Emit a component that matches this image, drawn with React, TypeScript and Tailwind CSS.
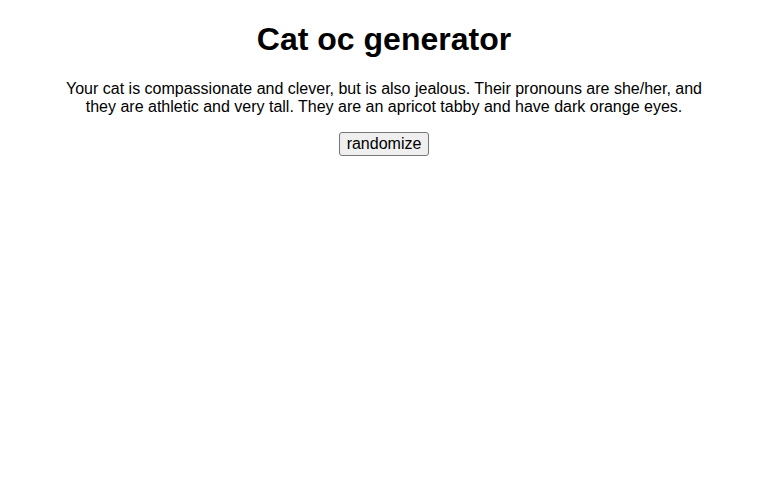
import { useState } from "react";

const traits = ["compassionate", "clever", "jealous", "brave", "shy", "curious", "grumpy", "loyal"];
const pronouns = ["she/her", "he/him", "they/them"];
const builds = ["athletic", "chubby", "scrawny", "muscular"];
const heights = ["very tall", "tall", "short", "very short"];
const coats = ["an apricot tabby", "a black cat", "a calico", "a grey tabby", "a tuxedo cat"];
const eyes = ["dark orange", "green", "blue", "amber", "yellow"];

function pick<T>(list: T[]) {
  return list[Math.floor(Math.random() * list.length)];
}

function describe() {
  return `Your cat is ${pick(traits)} and ${pick(traits)}, but is also ${pick(traits)}. Their pronouns are ${pick(pronouns)}, and they are ${pick(builds)} and ${pick(heights)}. They are ${pick(coats)} and have ${pick(eyes)} eyes.`;
}

export default function App() {
  const [text, setText] = useState(
    "Your cat is compassionate and clever, but is also jealous. Their pronouns are she/her, and they are athletic and very tall. They are an apricot tabby and have dark orange eyes."
  );

  return (
    <div className="min-h-screen bg-white px-2 pt-[21.44px] text-center text-black font-['Liberation_Sans',Arial,sans-serif]">
      <h1 className="text-[32px] font-bold leading-[normal]">Cat oc generator</h1>
      <p className="mx-auto mt-[21.44px] max-w-[650px] text-base leading-[normal]">{text}</p>
      <button
        onClick={() => setText(describe())}
        className="mt-4 rounded-[3px] border border-[#767676] bg-[#efefef] px-[7px] py-[2px] text-base leading-[normal] hover:bg-[#e5e5e5]"
      >
        randomize
      </button>
    </div>
  );
}
